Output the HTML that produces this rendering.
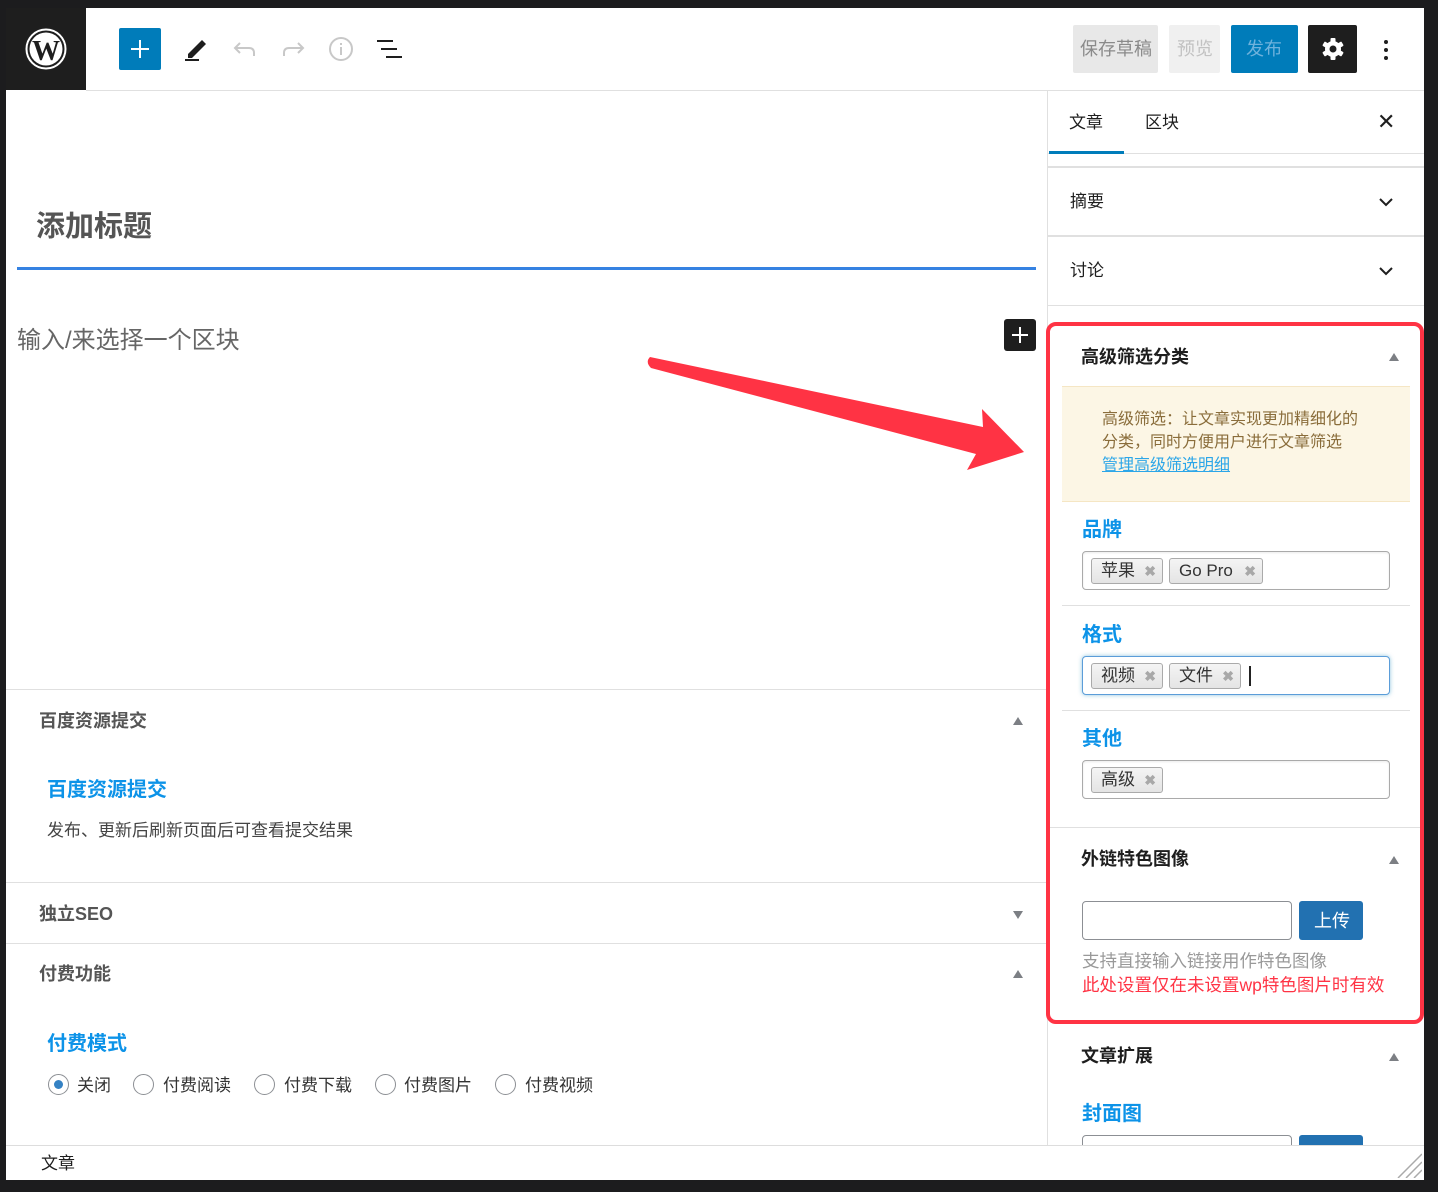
<!DOCTYPE html>
<html><head><meta charset="utf-8">
<style>
*{margin:0;padding:0;box-sizing:border-box}
body{width:1438px;height:1192px;background:#1c1c1e;position:relative;overflow:hidden;font-family:"Liberation Sans","Noto Sans CJK SC",sans-serif;color:#1e1e1e}
.a{position:absolute}
.t{position:absolute;line-height:1;white-space:nowrap}
.hr{position:absolute;height:1px;background:#e0e0e0}
.blue{color:#0d93e8;font-weight:bold}
.tri{position:absolute;width:0;height:0;border-left:5px solid transparent;border-right:5px solid transparent}
.up{border-bottom:8px solid #7c7f84}
.dn{border-top:8px solid #7c7f84}
.box{position:absolute;border:1px solid #aaa;border-radius:4px;background:#fff;box-shadow:inset 0 1px 2px rgba(0,0,0,.08)}
.tag{position:absolute;top:6px;height:26px;border:1px solid #aaa;border-radius:3px;background:linear-gradient(#f4f4f4,#e4e4e4);font-size:17px;line-height:24px;padding-left:9px;color:#333}
.tag b{position:absolute;right:6px;top:0;color:#a8a8a8;font-size:14px}
.radio{position:absolute;width:21px;height:21px;border:1px solid #8c8f94;border-radius:50%;background:#fff}
</style></head><body>
<div class="a" style="left:6px;top:8px;width:1418px;height:1172px;background:#fff"></div>
<!-- top bar -->
<div class="a" style="left:6px;top:8px;width:80px;height:82px;background:#1e1e1e"></div>
<svg class="a" style="left:25px;top:28px" width="42" height="42" viewBox="0 0 42 42"><circle cx="21" cy="21" r="19.5" fill="none" stroke="#fff" stroke-width="2"/><circle cx="21" cy="21" r="16.5" fill="#fff"/><text x="21" y="32" text-anchor="middle" font-family="Liberation Serif" font-weight="bold" font-size="28" fill="#1e1e1e">W</text></svg>
<div class="hr" style="left:86px;top:90px;width:1338px"></div>
<div class="a" style="left:119px;top:28px;width:42px;height:42px;background:#007cba;border-radius:2px"></div>
<div class="a" style="left:131px;top:48px;width:18px;height:2px;background:#fff"></div>
<div class="a" style="left:139px;top:40px;width:2px;height:18px;background:#fff"></div>
<svg class="a" style="left:182px;top:34px" width="28" height="28" viewBox="0 0 28 28"><path d="M6 20 L20 6 L24 10 L10 24 L6 24Z" fill="#1e1e1e"/><rect x="3" y="25" width="14" height="2" fill="#1e1e1e"/></svg>
<svg class="a" style="left:230px;top:36px" width="28" height="26" viewBox="0 0 28 26"><path d="M10 7 L5 12 L10 17 M5 12 H19 Q24 12 24 17 V20" fill="none" stroke="#c8c8c8" stroke-width="2"/></svg>
<svg class="a" style="left:280px;top:36px" width="28" height="26" viewBox="0 0 28 26"><path d="M18 7 L23 12 L18 17 M23 12 H9 Q4 12 4 17 V20" fill="none" stroke="#c8c8c8" stroke-width="2"/></svg>
<svg class="a" style="left:328px;top:36px" width="26" height="26" viewBox="0 0 26 26"><circle cx="13" cy="13" r="11" fill="none" stroke="#c8c8c8" stroke-width="2"/><rect x="12" y="11" width="2" height="8" fill="#c8c8c8"/><rect x="12" y="7" width="2" height="2" fill="#c8c8c8"/></svg>
<div class="a" style="left:377px;top:40px;width:16px;height:2px;background:#1e1e1e"></div>
<div class="a" style="left:381px;top:48px;width:16px;height:2px;background:#1e1e1e"></div>
<div class="a" style="left:386px;top:56px;width:16px;height:2px;background:#1e1e1e"></div>
<div class="a" style="left:1073px;top:25px;width:85px;height:48px;background:#e8e8e8;border-radius:2px"></div>
<div class="t" style="left:1080px;top:40px;font-size:18px;color:#8a8a8a">保存草稿</div>
<div class="a" style="left:1169px;top:25px;width:51px;height:48px;background:#f0f0f0;border-radius:2px"></div>
<div class="t" style="left:1177px;top:40px;font-size:18px;color:#c2c2c2">预览</div>
<div class="a" style="left:1231px;top:25px;width:67px;height:48px;background:#007cba;border-radius:2px"></div>
<div class="t" style="left:1246px;top:40px;font-size:18px;color:#6fb2dc">发布</div>
<div class="a" style="left:1308px;top:25px;width:49px;height:48px;background:#1e1e1e;border-radius:2px"></div>
<svg class="a" style="left:1320px;top:36px" width="26" height="26" viewBox="0 0 26 26"><g fill="#fff"><circle cx="13" cy="13" r="8"/><rect x="10.5" y="2" width="5" height="22" rx="1"/><rect x="10.5" y="2" width="5" height="22" rx="1" transform="rotate(60 13 13)"/><rect x="10.5" y="2" width="5" height="22" rx="1" transform="rotate(120 13 13)"/></g><circle cx="13" cy="13" r="3.5" fill="#1e1e1e"/></svg>
<div class="a" style="left:1384px;top:40px;width:4px;height:4px;background:#1e1e1e;border-radius:50%"></div>
<div class="a" style="left:1384px;top:48px;width:4px;height:4px;background:#1e1e1e;border-radius:50%"></div>
<div class="a" style="left:1384px;top:56px;width:4px;height:4px;background:#1e1e1e;border-radius:50%"></div>

<!-- main -->
<div class="t" style="left:36px;top:213px;font-size:29px;font-weight:bold;color:#555">添加标题</div>
<div class="a" style="left:17px;top:267px;width:1019px;height:3px;background:#3582e2"></div>
<div class="t" style="left:17px;top:329px;font-size:24px;color:#666">输入/来选择一个区块</div>
<div class="a" style="left:1004px;top:319px;width:32px;height:32px;background:#1e1e1e;border-radius:3px"></div>
<div class="a" style="left:1012px;top:334px;width:16px;height:2px;background:#fff"></div>
<div class="a" style="left:1019px;top:327px;width:2px;height:16px;background:#fff"></div>
<svg class="a" style="left:0;top:0" width="1438" height="1192"><path d="M650 357 L983 427 L982 409 L1024 452 L967 470 L976 454 L651 368 Q645 362 650 357Z" fill="#ff3344"/></svg>

<div class="hr" style="left:6px;top:689px;width:1041px"></div>
<div class="t" style="left:39px;top:712px;font-size:18px;font-weight:bold;color:#555">百度资源提交</div>
<div class="tri up" style="left:1013px;top:717px"></div>
<div class="t blue" style="left:47px;top:780px;font-size:20px">百度资源提交</div>
<div class="t" style="left:47px;top:822px;font-size:17px;color:#444">发布、更新后刷新页面后可查看提交结果</div>
<div class="hr" style="left:6px;top:882px;width:1041px"></div>
<div class="t" style="left:39px;top:905px;font-size:18px;font-weight:bold;color:#555">独立SEO</div>
<div class="tri dn" style="left:1013px;top:911px"></div>
<div class="hr" style="left:6px;top:943px;width:1041px"></div>
<div class="t" style="left:39px;top:965px;font-size:18px;font-weight:bold;color:#555">付费功能</div>
<div class="tri up" style="left:1013px;top:970px"></div>
<div class="t blue" style="left:47px;top:1034px;font-size:20px">付费模式</div>
<div class="radio" style="left:48px;top:1074px"></div><div class="a" style="left:54px;top:1080px;width:9px;height:9px;border-radius:50%;background:#3582c4"></div>
<div class="t" style="left:77px;top:1077px;font-size:17px;color:#333">关闭</div>
<div class="radio" style="left:133px;top:1074px"></div><div class="t" style="left:163px;top:1077px;font-size:17px;color:#333">付费阅读</div>
<div class="radio" style="left:254px;top:1074px"></div><div class="t" style="left:284px;top:1077px;font-size:17px;color:#333">付费下载</div>
<div class="radio" style="left:375px;top:1074px"></div><div class="t" style="left:404px;top:1077px;font-size:17px;color:#333">付费图片</div>
<div class="radio" style="left:495px;top:1074px"></div><div class="t" style="left:525px;top:1077px;font-size:17px;color:#333">付费视频</div>

<!-- sidebar -->
<div class="a" style="left:1047px;top:91px;width:1px;height:1054px;background:#e0e0e0"></div>
<div class="t" style="left:1069px;top:114px;font-size:17px">文章</div>
<div class="t" style="left:1145px;top:114px;font-size:17px">区块</div>
<div class="t" style="left:1377px;top:111px;font-size:22px">✕</div>
<div class="hr" style="left:1048px;top:153px;width:376px"></div>
<div class="a" style="left:1049px;top:151px;width:75px;height:3px;background:#007cba"></div>
<div class="a" style="left:1048px;top:166px;width:376px;height:2px;background:#e0e0e0"></div>
<div class="t" style="left:1070px;top:193px;font-size:17px">摘要</div>
<svg class="a" style="left:1378px;top:196px" width="16" height="12"><path d="M2 3 L8 9 L14 3" fill="none" stroke="#1e1e1e" stroke-width="2"/></svg>
<div class="a" style="left:1048px;top:235px;width:376px;height:2px;background:#e0e0e0"></div>
<div class="t" style="left:1070px;top:262px;font-size:17px">讨论</div>
<svg class="a" style="left:1378px;top:265px" width="16" height="12"><path d="M2 3 L8 9 L14 3" fill="none" stroke="#1e1e1e" stroke-width="2"/></svg>
<div class="hr" style="left:1048px;top:305px;width:376px"></div>

<!-- red box -->
<div class="a" style="left:1046px;top:322px;width:378px;height:702px;border:4px solid #ff3344;border-radius:10px"></div>
<div class="t" style="left:1081px;top:348px;font-size:18px;font-weight:bold">高级筛选分类</div>
<div class="tri up" style="left:1389px;top:353px"></div>
<div class="a" style="left:1062px;top:386px;width:348px;height:116px;background:#fcf6e5;border-top:1px solid #f5e6c4;border-bottom:1px solid #f5e6c4"></div>
<div class="t" style="left:1102px;top:412px;font-size:16px;color:#8a6d3b">高级筛选：让文章实现更加精细化的</div>
<div class="t" style="left:1102px;top:435px;font-size:16px;color:#8a6d3b">分类，同时方便用户进行文章筛选</div>
<div class="t" style="left:1102px;top:458px;font-size:16px;color:#2ca6e8;text-decoration:underline">管理高级筛选明细</div>

<div class="t blue" style="left:1082px;top:520px;font-size:20px">品牌</div>
<div class="box" style="left:1082px;top:551px;width:308px;height:39px">
<div class="tag" style="left:8px;width:72px">苹果<b>✖</b></div>
<div class="tag" style="left:86px;width:94px">Go Pro<b>✖</b></div></div>
<div class="hr" style="left:1062px;top:605px;width:348px"></div>
<div class="t blue" style="left:1082px;top:625px;font-size:20px">格式</div>
<div class="box" style="left:1082px;top:656px;width:308px;height:39px;border-color:#5b9dd9;box-shadow:0 0 4px rgba(30,140,190,.5)">
<div class="tag" style="left:8px;width:72px">视频<b>✖</b></div>
<div class="tag" style="left:86px;width:72px">文件<b>✖</b></div>
<div class="a" style="left:166px;top:9px;width:2px;height:20px;background:#222"></div></div>
<div class="hr" style="left:1062px;top:710px;width:348px"></div>
<div class="t blue" style="left:1082px;top:729px;font-size:20px">其他</div>
<div class="box" style="left:1082px;top:760px;width:308px;height:39px">
<div class="tag" style="left:8px;width:72px">高级<b>✖</b></div></div>
<div class="hr" style="left:1050px;top:827px;width:370px"></div>
<div class="t" style="left:1081px;top:850px;font-size:18px;font-weight:bold">外链特色图像</div>
<div class="tri up" style="left:1389px;top:856px"></div>
<div class="a" style="left:1082px;top:901px;width:210px;height:39px;border:1px solid #8c8f94;border-radius:4px"></div>
<div class="a" style="left:1299px;top:901px;width:64px;height:39px;background:#2271b1;border-radius:3px"></div>
<div class="t" style="left:1314px;top:912px;font-size:18px;color:#fff">上传</div>
<div class="t" style="left:1082px;top:953px;font-size:17.5px;color:#999">支持直接输入链接用作特色图像</div>
<div class="t" style="left:1082px;top:977px;font-size:17.5px;color:#ff3344">此处设置仅在未设置wp特色图片时有效</div>

<div class="t" style="left:1081px;top:1047px;font-size:18px;font-weight:bold">文章扩展</div>
<div class="tri up" style="left:1389px;top:1053px"></div>
<div class="t blue" style="left:1082px;top:1104px;font-size:20px">封面图</div>
<div class="a" style="left:1082px;top:1135px;width:210px;height:20px;border:1px solid #8c8f94;border-radius:4px"></div>
<div class="a" style="left:1299px;top:1135px;width:64px;height:20px;background:#2271b1;border-radius:3px"></div>

<!-- status bar -->
<div class="a" style="left:6px;top:1145px;width:1418px;height:35px;background:#fff;border-top:1px solid #ddd"></div>
<div class="t" style="left:41px;top:1155px;font-size:17px">文章</div>
<svg class="a" style="left:1396px;top:1152px" width="26" height="26"><path d="M2 26 L26 2 M10 26 L26 10 M18 26 L26 18" stroke="#aaa" stroke-width="1.5"/></svg>
</body></html>
